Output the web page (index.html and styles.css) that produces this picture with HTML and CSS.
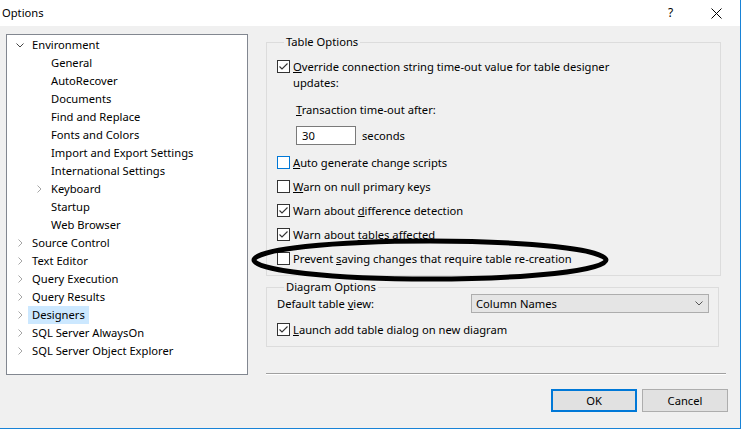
FILE: index.html
```html
<!DOCTYPE html>
<html>
<head>
<meta charset="utf-8">
<link rel="stylesheet" href="styles.css">
</head>
<body>
<div class="window">
  <div class="titlebar">
    <span class="title">Options</span>
    <span class="help">?</span>
    <span class="close"><svg width="11" height="11" viewBox="0 0 11 11"><path d="M0.5 0.5 L10.5 10.5 M10.5 0.5 L0.5 10.5" stroke="#000" stroke-width="1" fill="none"/></svg></span>
  </div>
  <div class="body">
    <div class="main">
      <div class="tree">
        <div class="row lvl0"><span class="tg"><svg width="8" height="5" viewBox="0 0 8 5"><path d="M0.5 0.5 L4 4 L7.5 0.5" stroke="#444" fill="none"/></svg></span><span class="lbl">Environment</span></div>
        <div class="row lvl1"><span class="tg"></span><span class="lbl">General</span></div>
        <div class="row lvl1"><span class="tg"></span><span class="lbl">AutoRecover</span></div>
        <div class="row lvl1"><span class="tg"></span><span class="lbl">Documents</span></div>
        <div class="row lvl1"><span class="tg"></span><span class="lbl">Find and Replace</span></div>
        <div class="row lvl1"><span class="tg"></span><span class="lbl">Fonts and Colors</span></div>
        <div class="row lvl1"><span class="tg"></span><span class="lbl">Import and Export Settings</span></div>
        <div class="row lvl1"><span class="tg"></span><span class="lbl">International Settings</span></div>
        <div class="row lvl1"><span class="tg"><svg width="5" height="8" viewBox="0 0 5 8"><path d="M0.5 0.5 L4 4 L0.5 7.5" stroke="#a6a6a6" fill="none"/></svg></span><span class="lbl">Keyboard</span></div>
        <div class="row lvl1"><span class="tg"></span><span class="lbl">Startup</span></div>
        <div class="row lvl1"><span class="tg"></span><span class="lbl">Web Browser</span></div>
        <div class="row lvl0"><span class="tg"><svg width="5" height="8" viewBox="0 0 5 8"><path d="M0.5 0.5 L4 4 L0.5 7.5" stroke="#a6a6a6" fill="none"/></svg></span><span class="lbl">Source Control</span></div>
        <div class="row lvl0"><span class="tg"><svg width="5" height="8" viewBox="0 0 5 8"><path d="M0.5 0.5 L4 4 L0.5 7.5" stroke="#a6a6a6" fill="none"/></svg></span><span class="lbl">Text Editor</span></div>
        <div class="row lvl0"><span class="tg"><svg width="5" height="8" viewBox="0 0 5 8"><path d="M0.5 0.5 L4 4 L0.5 7.5" stroke="#a6a6a6" fill="none"/></svg></span><span class="lbl">Query Execution</span></div>
        <div class="row lvl0"><span class="tg"><svg width="5" height="8" viewBox="0 0 5 8"><path d="M0.5 0.5 L4 4 L0.5 7.5" stroke="#a6a6a6" fill="none"/></svg></span><span class="lbl">Query Results</span></div>
        <div class="row lvl0"><span class="tg"><svg width="5" height="8" viewBox="0 0 5 8"><path d="M0.5 0.5 L4 4 L0.5 7.5" stroke="#a6a6a6" fill="none"/></svg></span><span class="lbl selected">Designers</span></div>
        <div class="row lvl0"><span class="tg"><svg width="5" height="8" viewBox="0 0 5 8"><path d="M0.5 0.5 L4 4 L0.5 7.5" stroke="#a6a6a6" fill="none"/></svg></span><span class="lbl">SQL Server AlwaysOn</span></div>
        <div class="row lvl0"><span class="tg"><svg width="5" height="8" viewBox="0 0 5 8"><path d="M0.5 0.5 L4 4 L0.5 7.5" stroke="#a6a6a6" fill="none"/></svg></span><span class="lbl">SQL Server Object Explorer</span></div>
      </div>
      <div class="pane">
        <fieldset class="group table-opts">
          <legend>Table Options</legend>
          <div class="check-row">
            <span class="cb"><svg width="11" height="11" viewBox="0 0 11 11"><path d="M1.5 5.5 L4 8 L9.5 2.5" stroke="#333" stroke-width="1.1" fill="none"/></svg></span>
            <span class="text"><u>O</u>verride connection string time-out value for table designer<br>updates:</span>
          </div>
          <div class="tlabel"><u>T</u>ransaction time-out after:</div>
          <div class="trow"><span class="input">30</span><span class="secs">seconds</span></div>
          <div class="checks">
            <div class="check-row"><span class="cb focus"></span><span class="text"><u>A</u>uto generate change scripts</span></div>
            <div class="check-row"><span class="cb"></span><span class="text"><u>W</u>arn on null primary keys</span></div>
            <div class="check-row"><span class="cb"><svg width="11" height="11" viewBox="0 0 11 11"><path d="M1.5 5.5 L4 8 L9.5 2.5" stroke="#333" stroke-width="1.1" fill="none"/></svg></span><span class="text">Warn about <u>d</u>ifference detection</span></div>
            <div class="check-row"><span class="cb"><svg width="11" height="11" viewBox="0 0 11 11"><path d="M1.5 5.5 L4 8 L9.5 2.5" stroke="#333" stroke-width="1.1" fill="none"/></svg></span><span class="text">Warn about <u>t</u>ables affected</span></div>
            <div class="check-row"><span class="cb"></span><span class="text">Prevent <u>s</u>aving changes that require table re-creation</span></div>
          </div>
        </fieldset>
        <fieldset class="group diagram">
          <legend>Diagram Options</legend>
          <div class="view-row">
            <span class="vlabel">Default table <u>v</u>iew:</span>
            <span class="combo"><span class="ctext">Column Names</span><svg width="8" height="5" viewBox="0 0 8 5"><path d="M0.5 0.5 L4 4 L7.5 0.5" stroke="#555" fill="none"/></svg></span>
          </div>
          <div class="check-row launch"><span class="cb"><svg width="11" height="11" viewBox="0 0 11 11"><path d="M1.5 5.5 L4 8 L9.5 2.5" stroke="#333" stroke-width="1.1" fill="none"/></svg></span><span class="text"><u>L</u>aunch add table dialog on new diagram</span></div>
        </fieldset>
        <div class="sep"></div>
      </div>
    </div>
    <div class="footer">
      <button class="btn ok">OK</button>
      <button class="btn">Cancel</button>
    </div>
  </div>
  <svg class="annot" width="741" height="429" viewBox="0 0 741 429"><ellipse cx="430" cy="260" rx="176" ry="19" fill="none" stroke="#000" stroke-width="5"/></svg>
</div>
</body>
</html>
```

FILE: styles.css
```css
* { box-sizing: border-box; }
html, body { margin: 0; padding: 0; background: #fff; }
body {
  font-family: "Noto Sans", "Open Sans", sans-serif;
  font-size: 11.2px;
  line-height: 16px;
  color: #000;
}
.window {
  position: relative;
  width: 741px;
  height: 429px;
  border-right: 1px solid #1883d7;
  border-bottom: 1px solid #1883d7;
  display: flex;
  flex-direction: column;
}
.titlebar {
  height: 26px;
  background: #fff;
  display: flex;
  align-items: center;
  padding-left: 2px;
}
.title { flex: 1; }
.help { width: 10px; margin-right: 33px; font-size: 12px; }
.close { width: 11px; height: 11px; margin-right: 18px; display: flex; }
.body {
  flex: 1;
  background: #f0f0f0;
  display: flex;
  flex-direction: column;
}
.main {
  display: flex;
  padding: 8px 0 0 6px;
}
.tree {
  width: 242px;
  height: 341px;
  border: 1px solid #828790;
  background: #fff;
  padding-top: 1px;
}
.row {
  height: 18px;
  display: flex;
  align-items: center;
  white-space: nowrap;
}
.lvl0 { padding-left: 6px; }
.lvl1 { padding-left: 25px; }
.tg {
  width: 14px;
  height: 18px;
  margin-right: 1px;
  display: flex;
  align-items: center;
  justify-content: center;
}
.lbl { padding: 1px 4px; line-height: 16px; }
.lbl.selected { background: #cce8ff; }
.pane {
  margin-left: 18px;
  width: 460px;
  height: 341px;
  display: flex;
  flex-direction: column;
}
.group {
  margin: 0;
  min-width: 0;
  border: 1px solid #dcdcdc;
  padding: 0 0 8px 10px;
}
.group legend {
  padding: 0 2px;
  margin-left: 7px;
  line-height: 16px;
}
.table-opts { width: 455px; padding-top: 9px; }
.diagram { width: 453px; margin-top: 3px; padding-top: 0; }
.check-row {
  display: flex;
  align-items: flex-start;
  white-space: nowrap;
}
.cb {
  width: 13px;
  height: 13px;
  border: 1px solid #333;
  background: #fff;
  margin-top: 1px;
  margin-right: 3px;
  flex: none;
  display: flex;
}
.cb.focus { border-color: #0078d7; }
.tlabel { margin-top: 11px; padding-left: 19px; }
.trow {
  margin-top: 8px;
  padding-left: 19px;
  display: flex;
  align-items: center;
}
.input {
  width: 60px;
  height: 19px;
  border: 1px solid #7a7a7a;
  background: #fff;
  padding-left: 5px;
  line-height: 17px;
}
.secs { margin-left: 6px; }
.checks {
  margin-top: 10px;
  display: flex;
  flex-direction: column;
  gap: 8px;
}
.view-row {
  margin-top: -1px;
  height: 19px;
  display: flex;
  align-items: center;
}
.vlabel { width: 194px; }
.combo {
  width: 238px;
  height: 19px;
  border: 1px solid #adadad;
  background: #e5e5e5;
  display: flex;
  align-items: center;
  padding: 0 5px 0 4px;
}
.ctext { flex: 1; }
.launch { margin-top: 9px; }
.sep {
  margin-top: auto;
  height: 2px;
  border-top: 1px solid #a0a0a0;
  border-bottom: 1px solid #fff;
}
.footer {
  display: flex;
  justify-content: flex-end;
  gap: 5px;
  padding: 14px 12px 0 0;
}
.btn {
  width: 86px;
  height: 23px;
  font: inherit;
  color: #000;
  background: #e1e1e1;
  border: 1px solid #adadad;
  padding: 0;
}
.btn.ok { border: 2px solid #0078d7; }
.annot {
  position: absolute;
  left: 0;
  top: 0;
  pointer-events: none;
}
u { text-decoration: underline; text-underline-offset: 1px; }
```
